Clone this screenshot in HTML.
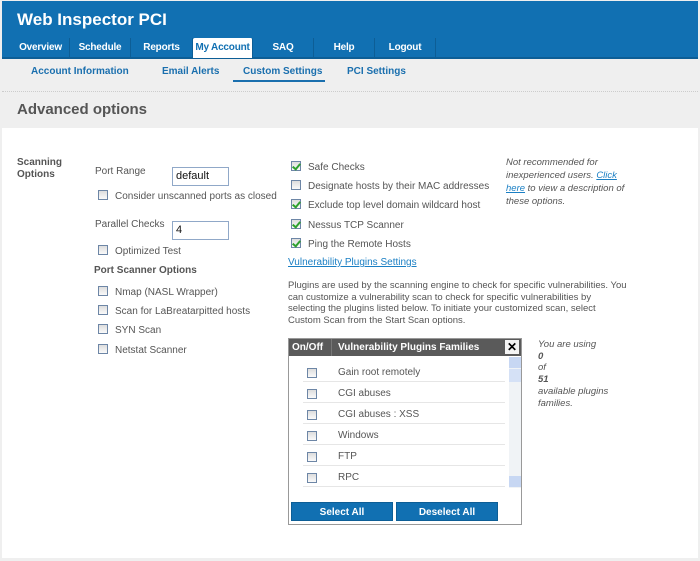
<!DOCTYPE html>
<html><head><style>
*{margin:0;padding:0;box-sizing:border-box}
body{width:700px;height:561px;background:#efefef;font-family:"Liberation Sans",sans-serif;position:relative;overflow:hidden;color:#555}
.a{position:absolute}
.hdr2{left:2px;top:1px;width:696px;height:58px;background:#1170b2;border-bottom:2px solid #0d5e96}
.title{left:17px;top:10px;font-size:17px;font-weight:bold;color:#fff}
.tab{top:38px;height:20px;font-size:10px;font-weight:bold;color:#fff;text-align:center;line-height:20px;border-right:1px solid #0d5e96;white-space:nowrap;letter-spacing:-0.2px}
.tab.on{background:#fff;color:#1170b2;border-radius:2px 2px 0 0}
.sub{top:66px;font-size:10px;font-weight:bold;color:#1a6fae;white-space:nowrap}
.cb{width:10px;height:10px;border:1px solid #6d86a6;background:linear-gradient(#ddd,#fafafa);position:absolute}
.ck::after{content:"";position:absolute;left:2px;top:0px;width:3px;height:6px;border:solid #2ea02e;border-width:0 2px 2px 0;transform:rotate(40deg)}
.t{font-size:10px;color:#555;position:absolute;white-space:nowrap}
.inp{position:absolute;border:1px solid #90a8c8;background:#fff;font-size:11px;color:#111;padding:2px 3px;height:19px}
.row{position:absolute;left:303px;width:202px;height:21px;border-bottom:1px solid #e6e6e6}
.btn{position:absolute;top:502px;height:19px;background:#1170b2;color:#fff;font-weight:bold;font-size:10px;text-align:center;line-height:19px;border:1px solid #0d5e96}
</style></head><body>
<div class="a hdr2"></div>
<div class="a title">Web Inspector PCI</div>
<div class="a tab" style="left:12px;width:58px">Overview</div>
<div class="a tab" style="left:70px;width:61px">Schedule</div>
<div class="a tab" style="left:131px;width:62px">Reports</div>
<div class="a tab on" style="left:193px;width:60px">My Account</div>
<div class="a tab" style="left:253px;width:61px">SAQ</div>
<div class="a tab" style="left:314px;width:61px">Help</div>
<div class="a tab" style="left:375px;width:61px">Logout</div>
<div class="a sub" style="left:31px">Account Information</div>
<div class="a sub" style="left:162px">Email Alerts</div>
<div class="a sub" style="left:243px">Custom Settings</div>
<div class="a" style="left:233px;top:80px;width:92px;height:2px;background:#1a6fae"></div>
<div class="a sub" style="left:347px">PCI Settings</div>
<div class="a" style="left:2px;top:91px;width:696px;border-top:1px dotted #ccc"></div>
<div class="a" style="left:17px;top:101px;font-size:15px;font-weight:bold;color:#555">Advanced options</div>
<div class="a" style="left:2px;top:128px;width:696px;height:430px;background:#fff"></div>

<div class="a" style="left:17px;top:157px;font-size:10px;font-weight:bold;color:#555;line-height:12px">Scanning<br>Options</div>
<div class="t" style="left:95px;top:166px">Port Range</div>
<div class="inp" style="left:172px;top:167px;width:57px">default</div>
<div class="cb" style="left:98px;top:190px"></div><div class="t" style="left:115px;top:191px">Consider unscanned ports as closed</div>
<div class="t" style="left:95px;top:219px">Parallel Checks</div>
<div class="inp" style="left:172px;top:221px;width:57px">4</div>
<div class="cb" style="left:98px;top:245px"></div><div class="t" style="left:115px;top:246px">Optimized Test</div>
<div class="t" style="left:94px;top:265px;font-weight:bold">Port Scanner Options</div>
<div class="cb" style="left:98px;top:286px"></div><div class="t" style="left:115px;top:287px">Nmap (NASL Wrapper)</div>
<div class="cb" style="left:98px;top:305px"></div><div class="t" style="left:115px;top:306px">Scan for LaBreatarpitted hosts</div>
<div class="cb" style="left:98px;top:324px"></div><div class="t" style="left:115px;top:325px">SYN Scan</div>
<div class="cb" style="left:98px;top:344px"></div><div class="t" style="left:115px;top:345px">Netstat Scanner</div>

<div class="cb ck" style="left:291px;top:161px"></div><div class="t" style="left:308px;top:162px">Safe Checks</div>
<div class="cb" style="left:291px;top:180px"></div><div class="t" style="left:308px;top:181px">Designate hosts by their MAC addresses</div>
<div class="cb ck" style="left:291px;top:199px"></div><div class="t" style="left:308px;top:200px">Exclude top level domain wildcard host</div>
<div class="cb ck" style="left:291px;top:219px"></div><div class="t" style="left:308px;top:220px">Nessus TCP Scanner</div>
<div class="cb ck" style="left:291px;top:238px"></div><div class="t" style="left:308px;top:239px">Ping the Remote Hosts</div>
<div class="t" style="left:288px;top:257px;color:#1a7fc4;text-decoration:underline">Vulnerability Plugins Settings</div>
<div class="a" style="left:506px;top:156px;font-size:9.5px;font-style:italic;line-height:13px;color:#555;width:120px">Not recommended for inexperienced users. <span style="color:#1a7fc4;text-decoration:underline">Click here</span> to view a description of these options.</div>
<div class="a" style="left:288px;top:280px;font-size:9.5px;line-height:11.5px;color:#555;width:342px">Plugins are used by the scanning engine to check for specific vulnerabilities. You can customize a vulnerability scan to check for specific vulnerabilities by selecting the plugins listed below. To initiate your customized scan, select Custom Scan from the Start Scan options.</div>

<div class="a" style="left:288px;top:338px;width:234px;height:187px;border:1px solid #999;background:#fff"></div>
<div class="a" style="left:289px;top:339px;width:232px;height:17px;background:#5a5a5a"></div>
<div class="a" style="left:292px;top:342px;font-size:10px;font-weight:bold;color:#fff">On/Off</div>
<div class="a" style="left:331px;top:339px;width:1px;height:17px;background:#777"></div>
<div class="a" style="left:338px;top:342px;font-size:10px;font-weight:bold;color:#fff">Vulnerability Plugins Families</div>
<div class="a" style="left:505px;top:340px;width:14px;height:14px;background:#f4f4f4;font-size:12px;font-weight:bold;color:#000;text-align:center;line-height:14px">✕</div>
<div class="a" style="left:509px;top:357px;width:12px;height:131px;background:#f0f3f6"></div>
<div class="a" style="left:509px;top:357px;width:12px;height:11px;background:#c7d7f3"></div>
<div class="a" style="left:509px;top:369px;width:12px;height:13px;background:#d5e1f6"></div>
<div class="a" style="left:509px;top:476px;width:12px;height:11px;background:#c7d7f3"></div>
<div class="row" style="top:361px"></div><div class="cb" style="left:307px;top:368px"></div><div class="t" style="left:338px;top:367px">Gain root remotely</div>
<div class="row" style="top:382px"></div><div class="cb" style="left:307px;top:389px"></div><div class="t" style="left:338px;top:388px">CGI abuses</div>
<div class="row" style="top:403px"></div><div class="cb" style="left:307px;top:410px"></div><div class="t" style="left:338px;top:409px">CGI abuses : XSS</div>
<div class="row" style="top:424px"></div><div class="cb" style="left:307px;top:431px"></div><div class="t" style="left:338px;top:430px">Windows</div>
<div class="row" style="top:445px"></div><div class="cb" style="left:307px;top:452px"></div><div class="t" style="left:338px;top:451px">FTP</div>
<div class="row" style="top:466px"></div><div class="cb" style="left:307px;top:473px"></div><div class="t" style="left:338px;top:472px">RPC</div>
<div class="btn" style="left:291px;width:102px">Select All</div>
<div class="btn" style="left:396px;width:102px">Deselect All</div>
<div class="a" style="left:538px;top:339px;font-size:9.5px;font-style:italic;line-height:11.7px;color:#555">You are using<br><b>0</b><br>of<br><b>51</b><br>available plugins<br>families.</div>
</body></html>
